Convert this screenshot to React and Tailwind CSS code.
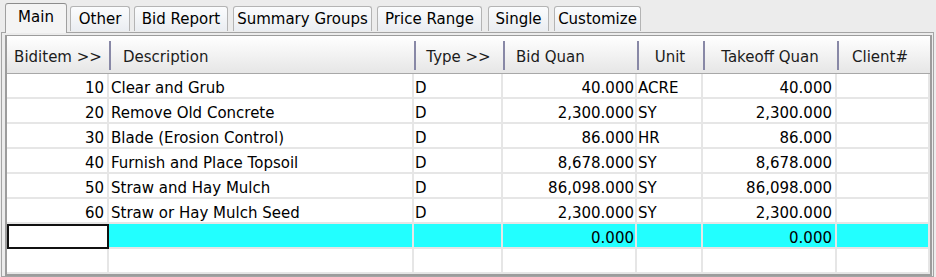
const TABS = [
  { label: 'Main', w: 'w-[62px]' },
  { label: 'Other', w: 'w-[60px] ml-[3px]' },
  { label: 'Bid Report', w: 'w-[94px] ml-[4px]' },
  { label: 'Summary Groups', w: 'w-[139px] ml-[5px]' },
  { label: 'Price Range', w: 'w-[105px] ml-[5px]' },
  { label: 'Single', w: 'w-[61px] ml-[6px]' },
  { label: 'Customize', w: 'w-[87px] ml-[5px]' },
];

const COLS = [
  { label: 'Biditem >>', head: 'justify-center' },
  { label: 'Description', head: 'justify-start pl-[14px]' },
  { label: 'Type >>', head: 'justify-center' },
  { label: 'Bid Quan', head: 'justify-start pl-[13px]' },
  { label: 'Unit', head: 'justify-center' },
  { label: 'Takeoff Quan', head: 'justify-center' },
  { label: 'Client#', head: 'justify-start pl-[15px]' },
];

const ROWS = [
  ['10', 'Clear and Grub', 'D', '40.000', 'ACRE', '40.000'],
  ['20', 'Remove Old Concrete', 'D', '2,300.000', 'SY', '2,300.000'],
  ['30', 'Blade (Erosion Control)', 'D', '86.000', 'HR', '86.000'],
  ['40', 'Furnish and Place Topsoil', 'D', '8,678.000', 'SY', '8,678.000'],
  ['50', 'Straw and Hay Mulch', 'D', '86,098.000', 'SY', '86,098.000'],
  ['60', 'Straw or Hay Mulch Seed', 'D', '2,300.000', 'SY', '2,300.000'],
];

const grid = 'grid grid-cols-[102px_305px_89px_134px_66px_134px_93px]';
const cell = 'h-[25px] pt-[5px] border-r-2 border-b-2 border-[#e6e6e6] flex items-center whitespace-nowrap overflow-hidden';

const App = () => {
  return (
    <div className="w-[936px] h-[277px] bg-[#ececec] text-[15px] text-black font-['DejaVu_Sans',sans-serif] overflow-hidden">
      <div className="h-[32px] flex items-end pl-[5px]">
        {TABS.map((t, i) =>
          i === 0 ? (
            <div key={t.label} className={`${t.w} h-[30px] -mb-[1px] relative z-10 flex items-center justify-center pb-[3px] rounded-t-[3px] border border-b-0 border-[#a0a0a0] border-t-[#8c8c8c] bg-[#f4f4f4]`}>
              {t.label}
            </div>
          ) : (
            <div key={t.label} className={`${t.w} h-[25px] mb-[1px] flex items-center justify-center rounded-t-[3px] border border-b-0 border-[#b4b4b4] bg-gradient-to-b from-[#fbfcfd] to-[#eaedf1]`}>
              {t.label}
            </div>
          )
        )}
      </div>

      <div className="ml-[1px] w-[933px] h-[245px] border border-[#a4a4a4] bg-[#ececec] pt-[2px] pl-[3px]">
        <div className="w-[927px] h-[241px] bg-white border-l-2 border-b-2 border-r-2 border-t border-[#9c9c9c] overflow-hidden">
          <div className={`${grid} h-[38px] bg-gradient-to-b from-[#ffffff] to-[#e6e6e6] border-b border-[#a8a8a8]`}>
            {COLS.map((c, i) => (
              <div key={c.label} className="relative flex items-center pt-[5px]">
                {i > 0 && <div className="absolute left-0 top-[5px] h-[29px] w-[2px] bg-[#8888a6]" />}
                <div className={`flex w-full ${c.head} text-[#1c1c1c]`}>{c.label}</div>
              </div>
            ))}
          </div>

          {ROWS.map((r) => (
            <div key={r[0]} className={grid}>
              <div className={`${cell} justify-end pr-[3px]`}>{r[0]}</div>
              <div className={`${cell} pl-[2px]`}>{r[1]}</div>
              <div className={`${cell} pl-[1px]`}>{r[2]}</div>
              <div className={`${cell} justify-end pr-[1px]`}>{r[3]}</div>
              <div className={`${cell} pl-[1px]`}>{r[4]}</div>
              <div className={`${cell} justify-end pr-[3px]`}>{r[5]}</div>
              <div className={cell} />
            </div>
          ))}

          <div className={grid}>
            <div className="h-[25px] bg-white border-2 border-[#111111]" />
            <div className={`${cell} bg-[#22ffff]`} />
            <div className={`${cell} bg-[#22ffff]`} />
            <div className={`${cell} bg-[#22ffff] justify-end pr-[1px]`}>0.000</div>
            <div className={`${cell} bg-[#22ffff]`} />
            <div className={`${cell} bg-[#22ffff] justify-end pr-[3px]`}>0.000</div>
            <div className={`${cell} bg-[#22ffff]`} />
          </div>

          <div className={grid}>
            {COLS.map((c) => (
              <div key={c.label} className={cell} />
            ))}
          </div>
        </div>
      </div>
    </div>
  );
};

export default App;
